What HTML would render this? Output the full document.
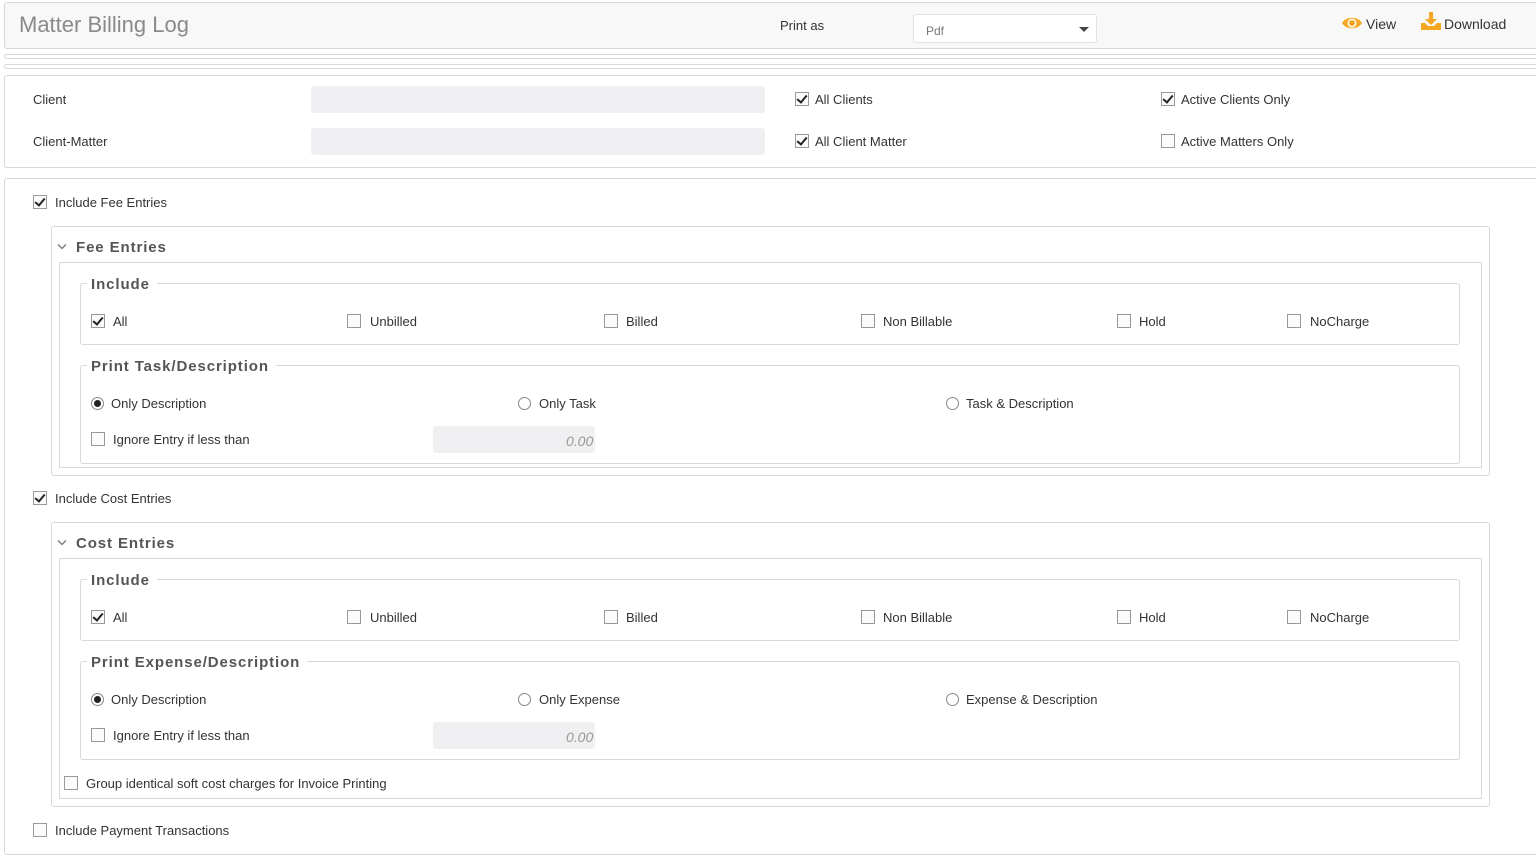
<!DOCTYPE html><html><head><style>
*{box-sizing:border-box}
body{margin:0;width:1536px;height:856px;background:#fff;font-family:"Liberation Sans",sans-serif;font-size:13px;color:#333;position:relative;overflow:hidden}
.a{position:absolute}
.box{position:absolute;border:1px solid #d8d8d8;border-radius:3px}
.t{position:absolute;line-height:16px;white-space:nowrap;transform:translateY(-7px)}
.cb{position:absolute;width:14px;height:14px;border:1px solid #999;background:#fbfbfb;transform:translateY(-7px)}
.cb.on::after{content:"";position:absolute;left:3px;top:0px;width:4px;height:8px;border:solid #222;border-width:0 2px 2px 0;transform:rotate(40deg)}
.rd{position:absolute;width:13px;height:13px;border:1px solid #888;border-radius:50%;background:#fff;transform:translateY(-6px)}
.rd.on::after{content:"";position:absolute;left:2px;top:2px;width:7px;height:7px;border-radius:50%;background:#222}
.leg{position:absolute;font-size:15px;font-weight:bold;letter-spacing:0.9px;color:#555;background:#fff;padding:0 7px 0 4px;line-height:18px;transform:translateY(-8px)}
.inp{position:absolute;background:#f0f0f2;border-radius:3px}
.chev{position:absolute}
</style></head><body>
<div class="box" style="left:4px;top:2px;width:1540px;height:47px;background:#f8f8f8"></div>
<div class="t" style="left:19px;top:25px;font-size:22px;line-height:28px;transform:translateY(-14px);color:#8a8a8a">Matter Billing Log</div>
<div class="t" style="left:780px;top:25px">Print as</div>
<div class="a" style="left:913px;top:14px;width:184px;height:29px;background:#fff;border:1px solid #e2e2e2;border-radius:3px"></div>
<div class="t" style="left:926px;top:30px;font-size:12px;color:#777">Pdf</div>
<div class="a" style="left:1079px;top:27px;border:5px solid transparent;border-top-color:#444;border-bottom:0"></div>
<svg class="a" style="left:1341px;top:15px" width="22" height="16" viewBox="0 0 22 16"><path d="M1 8C5 1 17 1 21 8C17 15 5 15 1 8Z" fill="#f5a623"/><circle cx="11" cy="8" r="4.5" fill="#fff"/><circle cx="11" cy="8" r="3" fill="#f5a623"/></svg>
<div class="t" style="left:1366px;top:23px;font-size:14px">View</div>
<svg class="a" style="left:1421px;top:12px" width="20" height="18" viewBox="0 0 20 18"><path d="M8 0h4v7h4l-6 6-6-6h4z" fill="#f5a623"/><path d="M0 11h4l3 3h6l3-3h4v7H0z" fill="#f5a623"/></svg>
<div class="t" style="left:1444px;top:23px;font-size:14px">Download</div>
<div class="box" style="left:4px;top:54px;width:1540px;height:5px"></div>
<div class="box" style="left:4px;top:64px;width:1540px;height:5px"></div>
<div class="box" style="left:4px;top:75px;width:1540px;height:93px"></div>
<div class="t" style="left:33px;top:99px">Client</div>
<div class="t" style="left:33px;top:141px">Client-Matter</div>
<div class="inp" style="left:311px;top:86px;width:454px;height:27px"></div>
<div class="inp" style="left:311px;top:128px;width:454px;height:27px"></div>
<div class="cb on" style="left:795px;top:99px"></div><div class="t" style="left:815px;top:99px">All Clients</div>
<div class="cb on" style="left:795px;top:141px"></div><div class="t" style="left:815px;top:141px">All Client Matter</div>
<div class="cb on" style="left:1161px;top:99px"></div><div class="t" style="left:1181px;top:99px">Active Clients Only</div>
<div class="cb" style="left:1161px;top:141px"></div><div class="t" style="left:1181px;top:141px">Active Matters Only</div>

<div class="box" style="left:4px;top:178px;width:1540px;height:677px"></div>
<div class="cb on" style="left:33px;top:202px"></div><div class="t" style="left:55px;top:202px">Include Fee Entries</div>
<div class="cb on" style="left:33px;top:498px"></div><div class="t" style="left:55px;top:498px">Include Cost Entries</div>
<div class="cb" style="left:33px;top:830px"></div><div class="t" style="left:55px;top:830px">Include Payment Transactions</div>

<!-- Fee panel -->
<div class="box" style="left:51px;top:226px;width:1439px;height:250px"></div>
<svg class="chev" style="left:57px;top:243px" width="10" height="7" viewBox="0 0 10 7"><path d="M1 1.5l4 4 4-4" fill="none" stroke="#777" stroke-width="1.3"/></svg>
<div class="t" style="left:76px;top:247px;font-size:15px;font-weight:bold;letter-spacing:0.9px;color:#555">Fee Entries</div>
<div class="box" style="left:59px;top:262px;width:1423px;height:206px;border-radius:0"></div>
<div class="box" style="left:80px;top:283px;width:1380px;height:62px"></div>
<div class="leg" style="left:87px;top:284px">Include</div>
<div class="box" style="left:80px;top:365px;width:1380px;height:99px"></div>
<div class="leg" style="left:87px;top:366px">Print Task/Description</div>
<div class="cb on" style="left:91px;top:321px"></div><div class="t" style="left:113px;top:321px">All</div>
<div class="cb" style="left:347px;top:321px"></div><div class="t" style="left:370px;top:321px">Unbilled</div>
<div class="cb" style="left:604px;top:321px"></div><div class="t" style="left:626px;top:321px">Billed</div>
<div class="cb" style="left:861px;top:321px"></div><div class="t" style="left:883px;top:321px">Non Billable</div>
<div class="cb" style="left:1117px;top:321px"></div><div class="t" style="left:1139px;top:321px">Hold</div>
<div class="cb" style="left:1287px;top:321px"></div><div class="t" style="left:1310px;top:321px">NoCharge</div>
<div class="rd on" style="left:91px;top:403px"></div><div class="t" style="left:111px;top:403px">Only Description</div>
<div class="rd" style="left:518px;top:403px"></div><div class="t" style="left:539px;top:403px">Only Task</div>
<div class="rd" style="left:946px;top:403px"></div><div class="t" style="left:966px;top:403px">Task &amp; Description</div>
<div class="cb" style="left:91px;top:439px"></div><div class="t" style="left:113px;top:439px">Ignore Entry if less than</div>
<div class="inp" style="left:433px;top:426px;width:162px;height:27px"></div>
<div class="t" style="left:566px;top:440px;font-style:italic;color:#999;font-size:14px">0.00</div>

<!-- Cost panel -->
<div class="box" style="left:51px;top:522px;width:1439px;height:285px"></div>
<svg class="chev" style="left:57px;top:539px" width="10" height="7" viewBox="0 0 10 7"><path d="M1 1.5l4 4 4-4" fill="none" stroke="#777" stroke-width="1.3"/></svg>
<div class="t" style="left:76px;top:543px;font-size:15px;font-weight:bold;letter-spacing:0.9px;color:#555">Cost Entries</div>
<div class="box" style="left:59px;top:558px;width:1423px;height:241px;border-radius:0"></div>
<div class="box" style="left:80px;top:579px;width:1380px;height:62px"></div>
<div class="leg" style="left:87px;top:580px">Include</div>
<div class="box" style="left:80px;top:661px;width:1380px;height:99px"></div>
<div class="leg" style="left:87px;top:662px">Print Expense/Description</div>
<div class="cb on" style="left:91px;top:617px"></div><div class="t" style="left:113px;top:617px">All</div>
<div class="cb" style="left:347px;top:617px"></div><div class="t" style="left:370px;top:617px">Unbilled</div>
<div class="cb" style="left:604px;top:617px"></div><div class="t" style="left:626px;top:617px">Billed</div>
<div class="cb" style="left:861px;top:617px"></div><div class="t" style="left:883px;top:617px">Non Billable</div>
<div class="cb" style="left:1117px;top:617px"></div><div class="t" style="left:1139px;top:617px">Hold</div>
<div class="cb" style="left:1287px;top:617px"></div><div class="t" style="left:1310px;top:617px">NoCharge</div>
<div class="rd on" style="left:91px;top:699px"></div><div class="t" style="left:111px;top:699px">Only Description</div>
<div class="rd" style="left:518px;top:699px"></div><div class="t" style="left:539px;top:699px">Only Expense</div>
<div class="rd" style="left:946px;top:699px"></div><div class="t" style="left:966px;top:699px">Expense &amp; Description</div>
<div class="cb" style="left:91px;top:735px"></div><div class="t" style="left:113px;top:735px">Ignore Entry if less than</div>
<div class="inp" style="left:433px;top:722px;width:162px;height:27px"></div>
<div class="t" style="left:566px;top:736px;font-style:italic;color:#999;font-size:14px">0.00</div>
<div class="cb" style="left:64px;top:783px"></div><div class="t" style="left:86px;top:783px">Group identical soft cost charges for Invoice Printing</div>
</body></html>
